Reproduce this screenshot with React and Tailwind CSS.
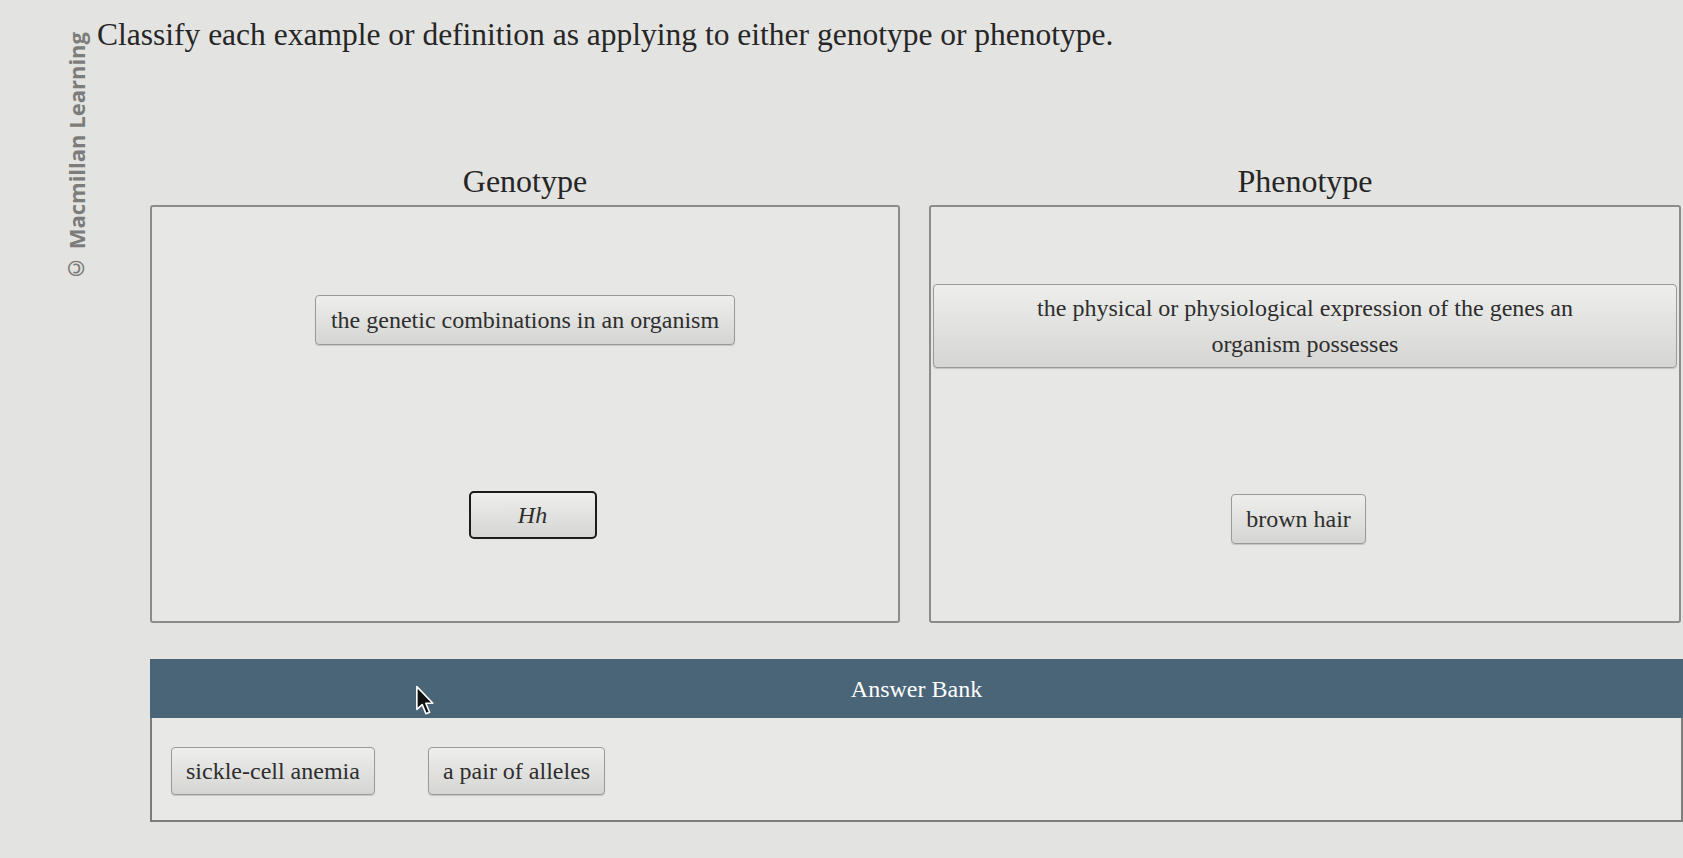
import React from "react";

const cardBase =
  "rounded-[4px] border border-[#9a9a98] bg-gradient-to-b from-[#eeeeec] to-[#d5d5d3] text-center text-[24px] leading-[30px] text-[#2e2e2e] shadow-[0_1px_1px_rgba(0,0,0,0.15)]";

function Card({ children, className = "" }) {
  return <div className={`${cardBase} ${className}`}>{children}</div>;
}

function Cursor() {
  return (
    <svg
      className="pointer-events-none absolute left-[415px] top-[685px]"
      width="20"
      height="31"
      viewBox="0 0 12 19"
    >
      <path
        d="M1 1 L1 15 L4.3 12 L6.6 17.6 L8.8 16.7 L6.5 11.2 L10.8 11.2 Z"
        fill="#111"
        stroke="#fff"
        strokeWidth="1"
        strokeLinejoin="round"
      />
    </svg>
  );
}

export default function App() {
  return (
    <div className="relative flex h-[858px] w-full overflow-hidden bg-[#e3e3e1] font-['Liberation_Serif',serif] text-[#262626]">
      <div className="w-[97px] shrink-0 pl-[65px] pt-[32px]">
        <div className="rotate-180 font-['Open_Sans',sans-serif] text-[22px] font-bold leading-none text-[#7c7c7a] [writing-mode:vertical-rl]">
          © Macmillan Learning
        </div>
      </div>

      <main className="flex-1 pt-[15px]">
        <h1 className="text-[31.5px] leading-[40px]">
          Classify each example or definition as applying to either genotype or phenotype.
        </h1>

        <div className="ml-[53px] mt-[108px] grid grid-cols-[750px_752px] gap-x-[29px]">
          <div>
            <h2 className="mb-[6px] text-center text-[32px] leading-[36px]">Genotype</h2>
            <div className="flex h-[418px] flex-col items-center rounded-[3px] border-2 border-[#8c8c8a] bg-[#e7e7e5] pt-[88px]">
              <Card className="flex h-[50px] items-center px-[15px]">
                the genetic combinations in an organism
              </Card>
              <div className="ml-[15px] mt-[146px] flex h-[48px] w-[128px] items-center justify-center rounded-[5px] border-2 border-[#1c1c1c] bg-gradient-to-b from-[#eeeeec] to-[#d5d5d3] text-[24px] italic text-[#2e2e2e]">
                Hh
              </div>
            </div>
          </div>

          <div>
            <h2 className="mb-[6px] text-center text-[32px] leading-[36px]">Phenotype</h2>
            <div className="flex h-[418px] flex-col items-center rounded-[3px] border-2 border-[#8c8c8a] bg-[#e7e7e5] pt-[77px]">
              <Card className="mx-[2px] self-stretch px-[15px] py-[5px] leading-[36px]">
                the physical or physiological expression of the genes an
                <br />
                organism possesses
              </Card>
              <Card className="mr-[13px] mt-[126px] flex h-[50px] items-center px-[14px]">brown hair</Card>
            </div>
          </div>
        </div>

        <section className="ml-[53px] mt-[36px]">
          <div className="flex h-[59px] items-center justify-center bg-[#4a6577] text-[24px] text-white">
            Answer Bank
          </div>
          <div className="flex h-[104px] items-start gap-[53px] border-2 border-t-0 border-[#7c7c7a] bg-[#e8e8e6] pl-[19px] pt-[29px]">
            <Card className="flex h-[48px] items-center px-[14px]">sickle-cell anemia</Card>
            <Card className="flex h-[48px] items-center px-[14px]">a pair of alleles</Card>
          </div>
        </section>
      </main>

      <Cursor />
    </div>
  );
}
